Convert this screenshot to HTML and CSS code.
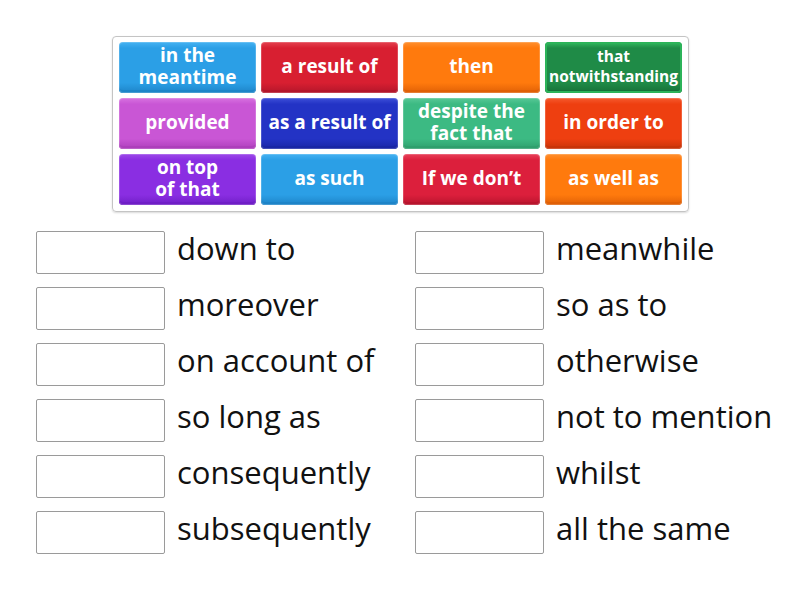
FILE: index.html
```html
<!DOCTYPE html>
<html>
<head>
<meta charset="utf-8">
<link rel="stylesheet" href="styles.css">
</head>
<body>
<div class="page">
  <div class="bank">
    <div class="tile blue">in the<br>meantime</div>
    <div class="tile red">a result of</div>
    <div class="tile orange">then</div>
    <div class="tile green small">that<br>notwithstanding</div>
    <div class="tile pink">provided</div>
    <div class="tile navy">as a result of</div>
    <div class="tile teal">despite the<br>fact that</div>
    <div class="tile vermil">in order to</div>
    <div class="tile violet">on top<br>of that</div>
    <div class="tile blue">as such</div>
    <div class="tile crimson">If we don’t</div>
    <div class="tile orange">as well as</div>
  </div>
  <div class="matches">
    <div class="row"><div class="box"></div><div class="label">down to</div></div>
    <div class="row"><div class="box"></div><div class="label">meanwhile</div></div>
    <div class="row"><div class="box"></div><div class="label">moreover</div></div>
    <div class="row"><div class="box"></div><div class="label">so as to</div></div>
    <div class="row"><div class="box"></div><div class="label">on account of</div></div>
    <div class="row"><div class="box"></div><div class="label">otherwise</div></div>
    <div class="row"><div class="box"></div><div class="label">so long as</div></div>
    <div class="row"><div class="box"></div><div class="label">not to mention</div></div>
    <div class="row"><div class="box"></div><div class="label">consequently</div></div>
    <div class="row"><div class="box"></div><div class="label">whilst</div></div>
    <div class="row"><div class="box"></div><div class="label">subsequently</div></div>
    <div class="row"><div class="box"></div><div class="label">all the same</div></div>
  </div>
</div>
</body>
</html>
```

FILE: styles.css
```css
html, body {
  margin: 0;
  padding: 0;
  background: #ffffff;
}
body {
  font-family: "Open Sans", "DejaVu Sans", sans-serif;
  width: 800px;
  height: 600px;
  overflow: hidden;
}
.page {
  padding-top: 36px;
}
.bank {
  margin-left: 112px;
  width: 563px;
  display: grid;
  grid-template-columns: repeat(4, 137px);
  grid-auto-rows: 51px;
  gap: 5px;
  padding: 5px 6px 6px 6px;
  border: 1px solid #c4c4c4;
  border-radius: 4px;
  box-shadow: 0 1px 2px rgba(0,0,0,0.15);
}
.tile {
  --c: #2d9fe6;
  --l: #4db3f0;
  --d: #1b82c4;
  background: linear-gradient(to bottom, var(--l) 0%, var(--c) 12%, var(--c) 80%, var(--d) 100%);
  border-radius: 4px;
  box-shadow: inset 0 0 0 1px rgba(255,255,255,0.18), inset 0 -3px 0 var(--d);
  color: #ffffff;
  font-weight: 700;
  font-size: 19px;
  line-height: 22px;
  text-align: center;
  display: flex;
  align-items: center;
  justify-content: center;
  padding-bottom: 3px;
  box-sizing: border-box;
  white-space: nowrap;
}
.tile.small {
  font-size: 15.5px;
  line-height: 20px;
}
.blue { --c: #2b9fe6; --l: #45b2f2; --d: #1d84c8; }
.red { --c: #d81f31; --l: #e4414f; --d: #b3162a; }
.orange { --c: #ff7a0d; --l: #ff9030; --d: #e06006; }
.green { --c: #1f8b47; --l: #33bb60; --d: #177038; box-shadow: inset 0 0 0 2px #2cb359, inset 0 -3px 0 #177038; }
.pink { --c: #c956d5; --l: #d872e0; --d: #ad3fbb; }
.navy { --c: #2333c5; --l: #3d4fd8; --d: #1926a5; }
.teal { --c: #3cba83; --l: #58c896; --d: #2f9f6d; }
.vermil { --c: #ee3f10; --l: #f55a2e; --d: #c83408; }
.violet { --c: #8a2ee2; --l: #9d4ae9; --d: #6f1ec6; }
.crimson { --c: #dc1f3c; --l: #e8415a; --d: #b8142d; }
.matches {
  margin-top: 19px;
  margin-left: 36px;
  display: grid;
  grid-template-columns: 379px 379px;
  grid-auto-rows: 43px;
  row-gap: 13px;
}
.row {
  display: flex;
  align-items: center;
  gap: 13px;
}
.box {
  width: 129px;
  height: 43px;
  box-sizing: border-box;
  border: 1px solid #9a9a9a;
  border-radius: 2px;
  background: #fff;
  flex: none;
}
.label {
  font-size: 31px;
  color: #111111;
  white-space: nowrap;
  line-height: 43px;
  padding-bottom: 8px;
  margin-left: -1px;
}
```
